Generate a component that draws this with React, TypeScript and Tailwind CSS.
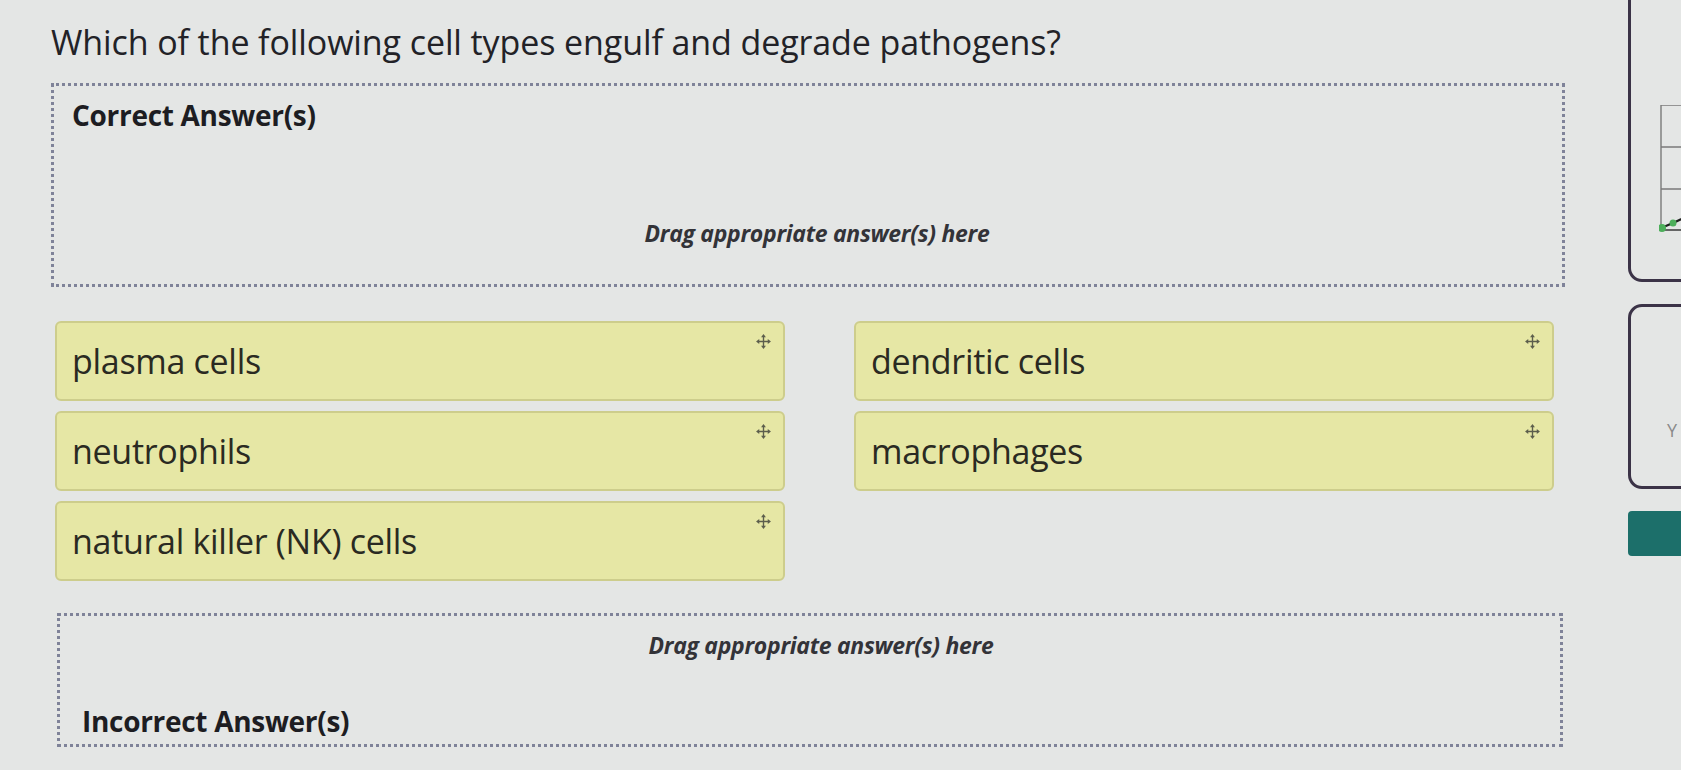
import React from "react";

const answers = {
  left: ["plasma cells", "neutrophils", "natural killer (NK) cells"],
  right: ["dendritic cells", "macrophages"],
};

function MoveIcon() {
  return (
    <svg width="17" height="17" viewBox="0 0 16 16" className="text-[#5c5e4c]">
      <path d="M8 3.5v9M3.5 8h9" stroke="currentColor" strokeWidth="1.3" />
      <path d="M8 1l-2.3 3h4.6zM8 15l-2.3-3h4.6zM1 8l3-2.3v4.6zM15 8l-3-2.3v4.6z" fill="currentColor" />
    </svg>
  );
}

function AnswerTile({ label }: { label: string }) {
  return (
    <div className="relative flex h-[80px] items-center rounded-md border-2 border-[#cdcd8c] bg-[#e6e7a5] pl-[15px]">
      <span className="text-[34px] leading-[42px] text-[#2a2a22] tracking-[-0.3px]">{label}</span>
      <div className="absolute right-[11px] top-[10px]">
        <MoveIcon />
      </div>
    </div>
  );
}

function DropHint() {
  return (
    <p className="text-center text-[23px] leading-[30px] font-bold italic text-[#333338] tracking-[-0.3px]">
      Drag appropriate answer(s) here
    </p>
  );
}

function SidePanel() {
  return (
    <aside className="flex-1 overflow-hidden">
      <div className="mt-[-20px] h-[302px] w-[300px] rounded-[14px] border-[3px] border-[#3b3347] pl-[28px] pt-[122px]">
        <svg width="60" height="130" viewBox="0 0 60 130">
          <path d="M2 0v125M2 0h58M2 42h58M2 84h58" stroke="#7a7a7a" strokeWidth="1.4" fill="none" />
          <path d="M2 125h58" stroke="#3a3a3a" strokeWidth="1.5" />
          <path d="M2 123l12-5 30-14" stroke="#1e1e1e" strokeWidth="2.2" fill="none" />
          <circle cx="3" cy="123" r="4" fill="#4cae5a" />
          <circle cx="14" cy="118" r="3.5" fill="#4cae5a" />
        </svg>
      </div>
      <div className="mt-[22px] flex h-[185px] w-[300px] items-end rounded-[14px] border-[3px] border-[#3b3347] pb-[44px] pl-[36px]">
        <span className="text-[18px] leading-[24px] text-[#8a8a8a]">Y</span>
      </div>
      <div className="mt-[22px] h-[45px] w-[300px] rounded-[4px] bg-[#1c6f6a]" />
    </aside>
  );
}

export default function App() {
  return (
    <div className="flex h-[770px] w-full overflow-hidden bg-[#e4e6e5] font-['Open_Sans','Noto_Sans',sans-serif]">
      <main className="w-[1628px] shrink-0 pl-[51px] pr-[63px] pt-[21px]">
        <h1 className="text-[34px] leading-[42px] text-[#222227] tracking-[-0.1px]">
          Which of the following cell types engulf and degrade pathogens?
        </h1>

        <section className="mt-[20px] flex h-[204px] flex-col border-[3px] border-dotted border-[#7f8399] pb-[36px] pl-[18px] pt-[12px]">
          <h2 className="text-[28px] leading-[34px] font-bold text-[#1d1d22] tracking-[-0.3px]">Correct Answer(s)</h2>
          <div className="mt-auto">
            <DropHint />
          </div>
        </section>

        <div className="ml-[4px] mt-[34px] grid grid-cols-[730px_700px] gap-x-[69px]">
          <div className="flex flex-col gap-[10px]">
            {answers.left.map((a) => (
              <AnswerTile key={a} label={a} />
            ))}
          </div>
          <div className="flex flex-col gap-[10px]">
            {answers.right.map((a) => (
              <AnswerTile key={a} label={a} />
            ))}
          </div>
        </div>

        <section className="ml-[6px] mr-[2px] mt-[32px] flex h-[134px] flex-col border-[3px] border-dotted border-[#7f8399] pb-[6px] pl-[22px] pt-[14px]">
          <DropHint />
          <h2 className="mt-auto text-[28px] leading-[34px] font-bold text-[#1d1d22] tracking-[-0.3px]">Incorrect Answer(s)</h2>
        </section>
      </main>
      <SidePanel />
    </div>
  );
}
